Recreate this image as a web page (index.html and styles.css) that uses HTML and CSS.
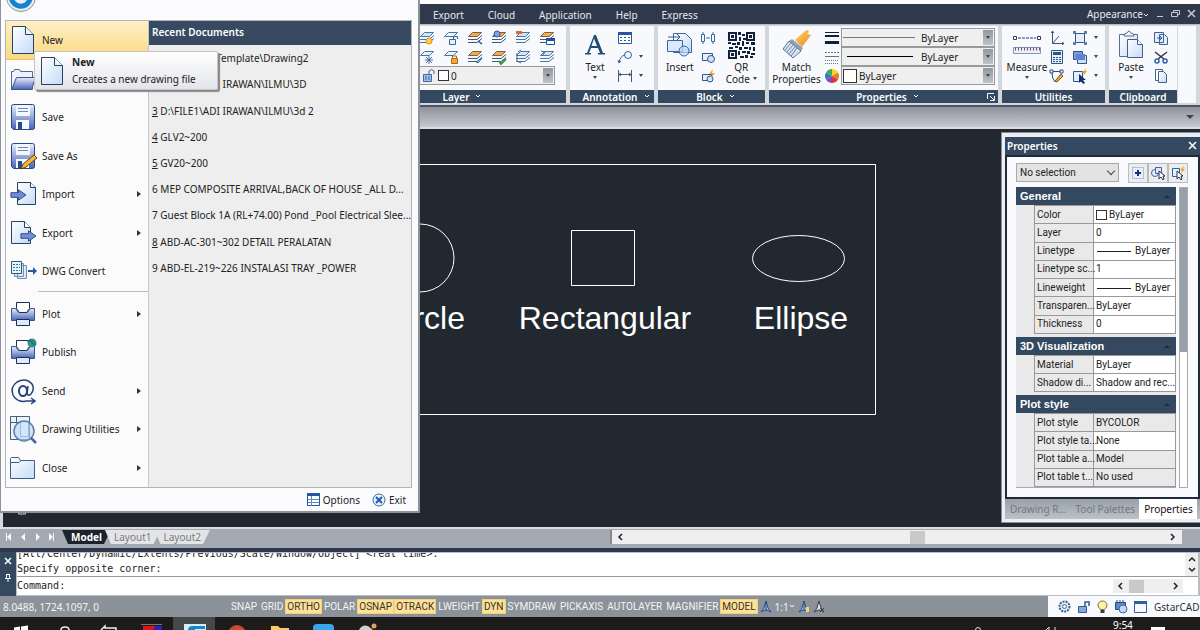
FILE: index.html
```html
<!DOCTYPE html>
<html lang="en">
<head>
    <meta charset="UTF-8">
    <meta name="viewport" content="width=device-width, initial-scale=1.0">
    <title>GstarCAD</title>
    <link rel="stylesheet" href="styles.css">
</head>
<body>
    <!-- Shared icon shapes -->
    <svg class="defs" width="0" height="0" aria-hidden="true">
        <defs>
            <linearGradient id="paper" x1="0" y1="0" x2="1" y2="1">
                <stop offset="0" stop-color="#fff"/><stop offset="1" stop-color="#c4dbf8"/>
            </linearGradient>
            <linearGradient id="steel" x1="0" y1="0" x2="0" y2="1">
                <stop offset="0" stop-color="#e6eeff"/><stop offset="1" stop-color="#4963b4"/>
            </linearGradient>
            <linearGradient id="gold" x1="0" y1="0" x2="1" y2="1">
                <stop offset="0" stop-color="#ffd36c"/><stop offset="1" stop-color="#e88b1d"/>
            </linearGradient>
        </defs>
        <symbol id="page" viewBox="0 0 28 30">
            <path d="M3.5 1.5h13l8 8v19h-21z" fill="url(#paper)" stroke="#29405f"/>
            <path d="M16.500 1.500v8h8" fill="#eef5ff" stroke="#29405f"/>
        </symbol>
        <symbol id="floppy" viewBox="0 0 28 30">
            <path d="M2.500 4.500q0-2 2-2h19q2 0 2 2v21q0 2-2 2h-19l-2-2z" fill="url(#steel)" stroke="#2b4485"/>
            <path d="M7 3h14v11H7z" fill="#f2f6fd"/>
            <path d="M9 6.500h10M9 9.500h10" stroke="#6f87b8"/>
            <path d="M7 18h13v9H7z" fill="#f5f8ff"/>
            <path d="M9 20h4v7H9z" fill="#274a92"/>
        </symbol>
        <symbol id="printer" viewBox="0 0 28 30">
            <path d="M2.500 9.500h4l3 4h9l3-4h4v12h-23z" fill="url(#steel)" stroke="#3b5393"/>
            <path d="M7.500 3.500h13v6l-3 4h-7l-3-4z" fill="#fff" stroke="#1c2f52"/>
            <path d="M7.500 20.500h13v6h-13z" fill="#dfeafd" stroke="#1c2f52"/>
        </symbol>
        <symbol id="arrow" viewBox="0 0 18 12">
            <path d="M1 3.500h8V.500l8 5.500-8 5.500v-3H1z" fill="#6f8dd2" stroke="#304a92"/>
        </symbol>
        <symbol id="layers" viewBox="0 0 16 16">
            <path d="M1 12.500h9l5-4M1 9.500h9l5-4" fill="none" stroke="#4a73a5"/>
            <path d="M5.500 2.500h9l-4 4h-9z" fill="#d3e5f8" stroke="#4a73a5"/>
        </symbol>
        <symbol id="layers-on" viewBox="0 0 16 16">
            <path d="M1 12.500h9l5-4M1 9.500h9l5-4" fill="none" stroke="#3a5a7c"/>
            <path d="M5.500 2.500h9l-4 4h-9z" fill="#f3ad4a" stroke="#7b6048"/>
        </symbol>
        <symbol id="sheet" viewBox="0 0 16 16">
            <path d="M5.500 2.500h9l-4 4h-9z" fill="#edf5ff" stroke="#4a73a5"/>
        </symbol>
        <symbol id="compass" viewBox="0 0 12 14">
            <path d="M6 1l2 7 3 4-4-2H5l-4 2 3-4z" fill="#a9c6ec" stroke="#284a82"/>
            <path d="M6 1v10" stroke="#284a82"/>
        </symbol>
    </svg>

    <!-- Ribbon tabs -->
    <nav class="tabs">
        <a href="#">Export</a>
        <a href="#">Cloud</a>
        <a href="#">Application</a>
        <a href="#">Help</a>
        <a href="#">Express</a>
        <div class="window-controls">
            <button>Appearance<svg width="6" height="5" viewBox="0 0 6 5"><path d="M1 1l2 2 2-2" fill="none" stroke="#e4e8ee"/></svg></button>
            <button aria-label="Minimize"><svg width="8" height="9" viewBox="0 0 8 9"><path d="M1 7.500h6" stroke="#c5cad3"/></svg></button>
            <button aria-label="Restore"><svg width="9" height="9" viewBox="0 0 9 9"><path d="M2.500 3V1.500h6v4H7M.500 3.500h6v4h-6z" fill="none" stroke="#c5cad3"/></svg></button>
            <button aria-label="Close"><svg width="9" height="9" viewBox="0 0 9 9"><path d="M1 1l7 7M8 1L1 8" stroke="#c5cad3" stroke-width="1.500"/></svg></button>
        </div>
    </nav>

    <!-- Ribbon -->
    <div class="ribbon">
        <section class="panel panel-layer">
            <div class="panel-body">
                <div class="layer-tools">
                    <div class="layer-grid">
                        <svg viewBox="0 0 16 16"><use href="#layers"/><circle cx="10" cy="11" r="3" fill="#ffd24a" stroke="#e08a1c"/></svg>
                        <svg viewBox="0 0 16 16"><use href="#sheet"/><path d="M6.500 9.500h6v5h-6zM10.500 9V6.500h4V9" fill="#e3efff" stroke="#3f6697"/></svg>
                        <svg viewBox="0 0 16 16"><use href="#layers-on"/><path d="M11 11l4 3" stroke="#274b80" stroke-width="1.500"/></svg>
                        <svg viewBox="0 0 16 16"><use href="#layers-on"/><circle cx="6" cy="4" r="3" fill="#7fa1e3" stroke="#3557a8"/></svg>
                        <svg viewBox="0 0 16 16"><use href="#layers"/><path d="M1 1h6v3H1z" fill="#dd6a28"/></svg>
                        <svg viewBox="0 0 16 16"><use href="#layers-on"/><path d="M7.500 8.500h8v6h-8z" fill="#fff" stroke="#1f4fa3"/><path d="M7 8h9v3H7z" fill="#1f4fa3"/></svg>
                        <svg viewBox="0 0 16 16"><use href="#sheet"/><path d="M10 7v8M6 11h8M7 8l6 6M13 8l-6 6" stroke="#446f9f"/></svg>
                        <svg viewBox="0 0 16 16"><use href="#sheet"/><path d="M8.500 9.500h6v5h-6z" fill="#f4a932" stroke="#a96b12"/><path d="M9.500 9V7h4v2" fill="none" stroke="#a96b12"/></svg>
                        <svg viewBox="0 0 16 16"><use href="#layers-on"/><path d="M8 12l3 2 4-5" fill="none" stroke="#274b80"/></svg>
                        <svg viewBox="0 0 16 16"><use href="#layers-on"/><path d="M8 12l2 3 5-5" fill="none" stroke="#2f9a3c" stroke-width="2"/></svg>
                        <svg viewBox="0 0 16 16"><use href="#layers"/><path d="M2 4v8l4 2M3 3l3-2" fill="none" stroke="#4b6585"/></svg>
                        <svg viewBox="0 0 16 16"><use href="#layers"/><path d="M2 2l4 1-2 3" fill="none" stroke="#4b6585"/></svg>
                    </div>
                    <div class="combo">
                        <svg width="14" height="15" viewBox="0 0 14 15"><path d="M1.500 6.500h8v7h-8z" fill="#9fc0ec" stroke="#40669c"/><path d="M7 6V3q3-3 5 0v3M4 8v4M7 8v4" fill="none" stroke="#40669c"/></svg>
                        <span class="swatch"></span>
                        <select aria-label="Current layer"><option>0</option></select>
                        <span class="drop"></span>
                    </div>
                </div>
            </div>
            <h2>Layer <svg class="chev" viewBox="0 0 6 5"><path d="M1 1l2 2 2-2"/></svg></h2>
        </section>

        <section class="panel panel-annotation">
            <div class="panel-body">
                <button class="big">
                    <svg width="28" height="30" viewBox="0 0 28 30"><path d="M13 6h2l7 18h2v1.500h-7V24h2l-2-5h-7l-2 5h2v1.500H4V24h2zM13 9.500L10.500 17H16z" fill="#234c74" fill-rule="evenodd"/></svg>
                    <span>Text</span><i class="caret"></i>
                </button>
                <div class="stack">
                    <button aria-label="Table"><svg viewBox="0 0 16 16"><path d="M1.500 2.500h13v11h-13z" fill="#fff" stroke="#28579b"/><path d="M1 2h14v3H1z" fill="#28579b"/><path d="M3 7.500h10M3 10.500h10" stroke="#28579b" stroke-dasharray="2 2"/></svg></button>
                    <button aria-label="Leader"><svg viewBox="0 0 16 16"><circle cx="11" cy="6" r="3.500" fill="#eef4ff" stroke="#3a6398"/><path d="M8 6Q3 7 2 14M1 11l1 3 2-2" fill="none" stroke="#3a6398"/></svg><i class="caret"></i></button>
                    <button aria-label="Dimension"><svg viewBox="0 0 16 16"><path d="M1.500 2v12M14.500 2v12M2 6.500h12M4 5L2 6.500 4 8M12 5l2 1.500L12 8" fill="none" stroke="#3d5a78"/></svg><i class="caret"></i></button>
                </div>
            </div>
            <h2>Annotation <svg class="chev" viewBox="0 0 6 5"><path d="M1 1l2 2 2-2"/></svg></h2>
        </section>

        <section class="panel panel-block">
            <div class="panel-body">
                <button class="big">
                    <svg width="28" height="30" viewBox="0 0 28 30"><path d="M7.500 4.500h12l6 6v13h-18z" fill="url(#paper)" stroke="#446991"/><path d="M1.500 11.500h15v11h-15z" fill="#dce9fb" stroke="#3967af"/><circle cx="18" cy="22" r="5" fill="#c3d6f6" fill-opacity=".7" stroke="#3967af"/><path d="M2 8h12m-3-3l3 3-3 3" fill="none" stroke="#2b5aa5"/></svg>
                    <span>Insert</span>
                </button>
                <div class="stack">
                    <button aria-label="Replace block"><svg viewBox="0 0 16 16"><path d="M1.500 4.500h3v7h-3zM11.500 4.500h3v7h-3zM3 2v2M3 12v2M13 2v2M13 12v2M6 8h4" fill="none" stroke="#2d709b"/></svg></button>
                    <button aria-label="Create block"><svg viewBox="0 0 16 16"><path d="M2.500 4.500h10v7h-10z" fill="#e7f0fc" stroke="#32598d"/><circle cx="11" cy="10" r="3.500" fill="#cfe0f7" stroke="#32598d"/></svg></button>
                    <button aria-label="Edit block"><svg viewBox="0 0 16 16"><path d="M2.500 6.500h9v6h-9z" fill="#e7f0fc" stroke="#32598d"/><circle cx="10" cy="11" r="3" fill="#cfe0f7" stroke="#32598d"/><path d="M13 1L9 6h3l-1 4 4-5h-3z" fill="#f2a52c"/></svg></button>
                </div>
                <button class="big">
                    <svg width="28" height="30" viewBox="0 0 28 30" shape-rendering="crispEdges">
                        <path d="M2 4h7v7H2zM20 4h7v7h-7zM2 22h7v7H2z" fill="none" stroke="#10213c" stroke-width="2"/>
                        <path d="M4 6h3v3H4zM22 6h3v3h-3zM4 24h3v3H4zM11 3h3v3h-3zM15 5h3v2h-3zM12 8h2v4h-2zM16 9h3v2h-3zM1 13h3v2H1zM5 14h4v2H5zM10 13h3v3h-3zM15 12h2v5h-2zM19 13h3v2h-3zM24 13h4v3h-4zM2 18h4v2H2zM8 17h3v2H8zM12 18h3v3h-3zM17 18h4v2h-4zM22 18h2v3h-2zM26 18h2v4h-2zM11 22h2v4h-2zM15 22h4v2h-4zM20 22h3v3h-3zM24 24h4v2h-4zM13 27h4v2h-4zM18 26h3v3h-3zM23 27h3v2h-3z" fill="#10213c"/>
                    </svg>
                    <span>QR</span><span>Code<i class="caret"></i></span>
                </button>
            </div>
            <h2>Block <svg class="chev" viewBox="0 0 6 5"><path d="M1 1l2 2 2-2"/></svg></h2>
        </section>

        <section class="panel panel-properties">
            <div class="panel-body">
                <button class="big">
                    <svg width="28" height="30" viewBox="0 0 28 30"><path d="M12 11l10-9 3-1 1 2-2 2 4 1-9 12z" fill="url(#gold)"/><path d="M9 10l11 9-2 3L6 12z" fill="#8fa3b6"/><path d="M6 12l12 10-8 7L0 20z" fill="#d8e3f4" stroke="#5d6f92"/><path d="M8 14l-6 7M10 16l-6 7M12 18l-6 7M14 19l-6 8" stroke="#6f7faa"/></svg>
                    <span>Match</span><span>Properties</span>
                </button>
                <div class="stack">
                    <button aria-label="Lineweight"><svg viewBox="0 0 16 16"><path d="M1 2.500h14" stroke="#0e213f"/><path d="M1 6h14" stroke="#0e213f" stroke-width="2"/><path d="M1 12.500h14" stroke="#0e213f" stroke-width="3"/></svg></button>
                    <button aria-label="Linetype"><svg viewBox="0 0 16 16"><path d="M1 3.500h14" stroke="#6b7480" stroke-dasharray="2 1"/><path d="M1 7.500h14" stroke="#6b7480"/><path d="M1 11.500h14M1 14.500h14" stroke="#6b7480" stroke-dasharray="1 1"/></svg></button>
                    <button aria-label="Color"><svg viewBox="0 0 16 16"><path d="M8 8V1a7 7 0 0 1 6 3.500z" fill="#f7d52b"/><path d="M8 8l6-3.500a7 7 0 0 1 0 7z" fill="#ee7d26"/><path d="M8 8l6 3.500A7 7 0 0 1 8 15z" fill="#dd3545"/><path d="M8 8v7a7 7 0 0 1-6-3.500z" fill="#8d47ad"/><path d="M8 8l-6 3.500a7 7 0 0 1 0-7z" fill="#2c78d5"/><path d="M8 8L2 4.500A7 7 0 0 1 8 1z" fill="#42ab47"/></svg></button>
                </div>
                <div class="property-combos">
                    <div class="combo"><span class="rule thin"></span><select aria-label="Lineweight"><option>ByLayer</option></select><span class="drop"></span></div>
                    <div class="combo"><span class="rule"></span><select aria-label="Linetype"><option>ByLayer</option></select><span class="drop"></span></div>
                    <div class="combo"><span class="swatch large"></span><select aria-label="Color"><option>ByLayer</option></select><span class="drop"></span></div>
                </div>
            </div>
            <h2>Properties <svg class="chev" viewBox="0 0 6 5"><path d="M1 1l2 2 2-2"/></svg>
                <svg class="launcher" viewBox="0 0 8 8"><path d="M.500 6V.500H7M3 3l4 4M7.500 3v4.500H3" fill="none" stroke="#fff"/></svg></h2>
        </section>

        <section class="panel panel-utilities">
            <div class="panel-body">
                <button class="big">
                    <svg width="28" height="30" viewBox="0 0 28 30"><path d="M.500 7.500h3v3h-3zM24.500 7.500h3v3h-3z" fill="#fff" stroke="#253d68"/><path d="M5 9h18" stroke="#253d68" stroke-dasharray="3 1"/><path d="M.500 18.500h27v6H.500z" fill="#e9effb" stroke="#8097bf"/><path d="M2 20h25" stroke="#745060" stroke-width="3" stroke-dasharray="1 2"/></svg>
                    <span>Measure</span><i class="caret"></i>
                </button>
                <div class="stack">
                    <button aria-label="UCS"><svg viewBox="0 0 16 16"><path d="M3.500 1v12.500H15M4 13l6-7M2 3l1.500-2L5 3M13 12l2 1.500-2 1.500" fill="none" stroke="#385778"/></svg></button>
                    <button aria-label="Calculator"><svg viewBox="0 0 16 16"><path d="M2.500 1.500h11v13h-11z" fill="#e6effa" stroke="#29558a"/><path d="M4 3h8v3H4z" fill="#29558a"/><path d="M4 8.500h8M4 10.500h8M4 12.500h8" stroke="#29558a" stroke-dasharray="2 1"/></svg></button>
                    <button aria-label="Point style"><svg viewBox="0 0 16 16"><path d="M1 2h3v3H1zM11 2h3v3h-3zM4 3.500h7M3 5q0 6 3 9" fill="none" stroke="#2b4d7e"/><path d="M6 13l6-7 2 2-6 6z" fill="#f0a13b" stroke="#8a5426"/></svg></button>
                </div>
                <div class="stack">
                    <button aria-label="Select"><svg viewBox="0 0 16 16"><path d="M3.500 3.500h9v9h-9z" fill="#e3eefc" stroke="#2c5791"/><path d="M1 1h3v3H1zM12 1h3v3h-3zM1 12h3v3H1zM12 12h3v3h-3z" fill="#5f7da7"/></svg><i class="caret"></i></button>
                    <button aria-label="Draw order"><svg viewBox="0 0 16 16"><path d="M1.500 2.500h9v8h-9z" fill="#7c9fda" stroke="#31568e"/><path d="M5.500 6.500h9v8h-9z" fill="#cfdef4" stroke="#31568e"/><path d="M4 5h9v6H4z" fill="#5e85c9"/></svg><i class="caret"></i></button>
                    <button aria-label="Quick select"><svg viewBox="0 0 16 16"><path d="M1.500 3.500h9v10h-9z" fill="#e3eefc" stroke="#2c5791"/><path d="M7 6v9l2-2 2 3 2-1-2-3h3z" fill="#142f72"/><path d="M14 0l-4 5h2l-1 3 4-5h-2z" fill="#ef9c25"/></svg><i class="caret"></i></button>
                </div>
            </div>
            <h2>Utilities</h2>
        </section>

        <section class="panel panel-clipboard">
            <div class="panel-body">
                <button class="big">
                    <svg width="28" height="30" viewBox="0 0 28 30"><path d="M2.500 5.500h18v22h-18z" fill="url(#paper)" stroke="#567292"/><path d="M7 7q0-3 3-3 2-4 4 0 3 0 3 3z" fill="#eff5fd" stroke="#567292"/><path d="M10.500 10.500h10l5 5v13h-15z" fill="url(#paper)" stroke="#445f83"/><path d="M20.500 10.500v5h5" fill="#fff" stroke="#445f83"/></svg>
                    <span>Paste</span><i class="caret"></i>
                </button>
                <div class="stack">
                    <button aria-label="Paste as block"><svg viewBox="0 0 16 16"><path d="M1.500 2.500h9v10h-9zM6.500 4.500h5l3 3v7h-8z" fill="#e2eefc" stroke="#3e648f"/><path d="M4 8h5M7 6l2 2-2 2" fill="none" stroke="#285cab"/></svg></button>
                    <button aria-label="Cut"><svg viewBox="0 0 16 16"><path d="M2 3l9 7M14 3l-9 7" stroke="#30363e" stroke-width="1.500"/><circle cx="4" cy="12" r="2" fill="none" stroke="#2d5db3" stroke-width="1.500"/><circle cx="12" cy="12" r="2" fill="none" stroke="#2d5db3" stroke-width="1.500"/></svg></button>
                    <button aria-label="Copy"><svg viewBox="0 0 16 16"><path d="M2.500 1.500h7v11h-7z" fill="#fff" stroke="#3e648f"/><path d="M5.500 3.500h5l3 3v8h-8z" fill="url(#paper)" stroke="#3e648f"/></svg></button>
                </div>
            </div>
            <h2>Clipboard</h2>
        </section>
    </div>

    <div class="doc-bar"><i class="caret"></i></div>

    <!-- Drawing area -->
    <main class="workspace">
        <svg class="drawing" width="900" height="398" viewBox="0 0 900 398">
            <g fill="none" stroke="#fff">
                <path d="M100.500 35.500h775v250h-775z"/>
                <circle cx="420" cy="129" r="34"/>
                <path d="M571.500 101.500h63v55h-63z"/>
                <ellipse cx="798.500" cy="129.500" rx="46" ry="23"/>
            </g>
            <g fill="#fff" font-family="Liberation Sans, Arial, sans-serif" font-size="32">
                <text x="465" y="200" text-anchor="end">Circle</text>
                <text x="605" y="200" text-anchor="middle">Rectangular</text>
                <text x="801" y="200" text-anchor="middle">Ellipse</text>
            </g>
            <path d="M18.500 378v7h7v-7" fill="none" stroke="#d0d4d8"/>
        </svg>

        <aside class="palette">
            <header>Properties<button aria-label="Close palette"><svg width="9" height="9" viewBox="0 0 9 9"><path d="M1 1l7 7M8 1L1 8" stroke="#fff" stroke-width="1.500"/></svg></button></header>
            <div class="palette-body">
                <div class="palette-tools">
                    <select aria-label="Selection"><option>No selection</option></select>
                    <div class="palette-buttons">
                        <button aria-label="Toggle pickadd"><svg viewBox="0 0 16 16"><path d="M2.500 2.500h11v11h-11z" fill="#e6eeff" stroke="#718ed0" stroke-dasharray="1 1"/><path d="M8 5v6M5 8h6" stroke="#17336c" stroke-width="2"/></svg></button>
                        <button aria-label="Select objects"><svg viewBox="0 0 16 16"><circle cx="5" cy="8" r="3.500" fill="#e6effc" stroke="#3d66a0"/><path d="M5.500 2.500h6v6h-6z" fill="#dbe9ff" stroke="#3d66a0"/><path d="M9 6v8l2-2 2 3 1-1-1-3h2z" fill="#fff" stroke="#26354d"/></svg></button>
                        <button aria-label="Quick select"><svg viewBox="0 0 16 16"><path d="M2.500 3.500h7v8h-7z" fill="#e6effc" stroke="#2b62ad"/><path d="M7 6v8l2-2 2 3 1-1-1-3h2z" fill="#fff" stroke="#26354d"/><path d="M14 1l-4 4h2l-1 3 4-4h-2z" fill="#ef9c25"/></svg></button>
                    </div>
                </div>
                <div class="property-list">
                    <div class="groups">
                        <h3>General<i></i></h3>
                        <table class="group-general">
                            <tr><th>Color</th><td><span class="box"></span>ByLayer</td></tr>
                            <tr><th>Layer</th><td>0</td></tr>
                            <tr><th>Linetype</th><td><span class="line"></span>ByLayer</td></tr>
                            <tr><th>Linetype sc...</th><td>1</td></tr>
                            <tr><th>Lineweight</th><td><span class="line"></span>ByLayer</td></tr>
                            <tr><th>Transparen...</th><td>ByLayer</td></tr>
                            <tr><th>Thickness</th><td>0</td></tr>
                        </table>
                        <h3>3D Visualization<i></i></h3>
                        <table class="group-visual">
                            <tr><th>Material</th><td>ByLayer</td></tr>
                            <tr><th>Shadow di...</th><td>Shadow and rec...</td></tr>
                        </table>
                        <h3>Plot style<i></i></h3>
                        <table class="group-plot">
                            <tr><th>Plot style</th><td class="locked">BYCOLOR</td></tr>
                            <tr><th>Plot style ta...</th><td>None</td></tr>
                            <tr><th>Plot table a...</th><td class="locked">Model</td></tr>
                            <tr><th>Plot table t...</th><td class="locked">No used</td></tr>
                        </table>
                    </div>
                    <div class="scroll-track"><span></span></div>
                </div>
            </div>
            <footer>
                <button>Drawing R...</button>
                <button>Tool Palettes</button>
                <button class="active">Properties</button>
            </footer>
        </aside>
    </main>

    <!-- Layout tabs and horizontal scroll -->
    <div class="layout-bar">
        <svg class="pager" width="50" height="10" viewBox="0 0 50 10"><path d="M1 1h1v8H1zM6 1v8L2 5zM20 1v8l-4-4zM31 1v8l4-4zM44 1v8l4-4zM48 1h1v8h-1z" fill="#f5f7f9"/></svg>
        <div class="layouts">
            <button class="active">Model</button>
            <button>Layout1</button>
            <button>Layout2</button>
        </div>
        <div class="hscroll">
            <svg width="6" height="8" viewBox="0 0 6 8"><path d="M5 1L2 4l3 3"/></svg>
            <span class="thumb"></span>
            <svg width="6" height="8" viewBox="0 0 6 8"><path d="M1 1l3 3-3 3"/></svg>
        </div>
    </div>

    <!-- Command line -->
    <div class="command">
        <div class="command-side">
            <svg width="8" height="8" viewBox="0 0 8 8"><path d="M1 1l6 6M7 1L1 7" stroke="#fff" stroke-width="1.500"/></svg>
            <svg width="8" height="9" viewBox="0 0 8 9"><path d="M2.500 1v4M5.500 1v4M2 1.500h4M1 5.500h6M4 6v3" stroke="#fff"/></svg>
        </div>
        <div class="command-main">
            <div class="history">
                <div class="lines">
                    <p>[All/Center/Dynamic/Extents/Previous/Scale/Window/Object] &lt;real time&gt;:</p>
                    <p>Specify opposite corner:</p>
                </div>
                <div class="vscroll">
                    <svg width="8" height="6" viewBox="0 0 8 6"><path d="M1 5l3-3 3 3"/></svg>
                    <svg width="8" height="6" viewBox="0 0 8 6"><path d="M1 1l3 3 3-3"/></svg>
                </div>
            </div>
            <div class="prompt">
                <label for="cmd">Command:</label>
                <input id="cmd" type="text">
                <div class="hscroll">
                    <svg width="6" height="8" viewBox="0 0 6 8"><path d="M5 1L2 4l3 3"/></svg>
                    <span class="thumb"></span>
                    <svg width="6" height="8" viewBox="0 0 6 8"><path d="M1 1l3 3-3 3"/></svg>
                </div>
            </div>
        </div>
    </div>

    <!-- Status bar -->
    <div class="status">
        <span class="coords">8.0488, 1724.1097, 0</span>
        <div class="toggles">
            <button>SNAP</button>
            <button>GRID</button>
            <button class="on">ORTHO</button>
            <button>POLAR</button>
            <button class="on">OSNAP</button>
            <button class="on">OTRACK</button>
            <button>LWEIGHT</button>
            <button class="on">DYN</button>
            <button>SYMDRAW</button>
            <button>PICKAXIS</button>
            <button>AUTOLAYER</button>
            <button>MAGNIFIER</button>
            <button class="on">MODEL</button>
        </div>
        <div class="scale">
            <svg width="12" height="14"><use href="#compass"/></svg>
            <button>1:1<svg width="6" height="5" viewBox="0 0 6 5"><path d="M1 1l2 2 2-2" fill="none" stroke="#fff"/></svg></button>
            <svg width="12" height="14" viewBox="0 0 12 14"><use href="#compass"/><path d="M8 7h3v5H8z" fill="#f7d66d"/></svg>
            <svg width="12" height="14" viewBox="0 0 12 14"><path d="M6 1l2 7 3 4-4-2H5l-4 2 3-4z" fill="#e4e6e9" stroke="#3b3f47"/><path d="M7 8l4 4M11 8l-4 4" stroke="#3b3f47"/></svg>
        </div>
        <div class="tray">
            <svg width="13" height="13" viewBox="0 0 13 13"><circle cx="6.500" cy="6.500" r="5" fill="#e9f1fb" stroke="#3c6392" stroke-width="2" stroke-dasharray="2 1"/><circle cx="6.500" cy="6.500" r="2" fill="#fff" stroke="#3c6392"/></svg>
            <svg width="14" height="14" viewBox="0 0 14 14"><path d="M1.500 6.500h8v6h-8z" fill="#86a9e0" stroke="#315895"/><path d="M8 6V2h4v4" fill="none" stroke="#315895" stroke-width="1.500"/></svg>
            <svg width="11" height="14" viewBox="0 0 11 14"><path d="M3.500 9.500Q1 7 1 5a4.500 4 0 0 1 9 0q0 2-2.500 4.500z" fill="#fff3a8" stroke="#7d6d3b"/><path d="M3.500 10h4v3h-4z" fill="#39424f"/></svg>
            <svg width="14" height="14" viewBox="0 0 14 14"><path d="M1.500 2.500h10v7h-10z" fill="#5f88c5" stroke="#23497f"/><path d="M3 0v3M6 0v3M9 0v3" stroke="#23497f"/><circle cx="9" cy="9" r="4" fill="#c3d8f5" stroke="#3869ac"/></svg>
            <svg width="13" height="13" viewBox="0 0 13 13"><path d="M.500 1.500h12v11H.500z" fill="#f5f9ff" stroke="#335fa0"/><path d="M0 1h13v3H0z" fill="#335fa0"/></svg>
            <span>GstarCAD</span>
        </div>
    </div>

    <!-- Desktop taskbar -->
    <div class="taskbar">
        <svg width="420" height="13" viewBox="0 0 420 13">
            <path d="M14 10.500l6-1V13h-6zM21 9.500l7-1V13h-7z" fill="#fff"/>
            <path d="M61 13q0-3 4-3t4 3" fill="none" stroke="#eee" stroke-width="1.500"/>
            <path d="M101 13l4-4v2h11v2" fill="none" stroke="#eee" stroke-width="1.500"/>
            <path d="M141 7h21v1h-21z" fill="#777"/><path d="M143 9h13l-3 4h-10z" fill="#e31219"/><path d="M156 9h6v4h-9z" fill="#2024c8"/>
            <path d="M173 0h42v13h-42z" fill="#45484b"/><path d="M184 7h22v6h-22z" fill="#d8edf8"/><path d="M188 13q0-4 5-4h12v3h-10v1z" fill="#1586c7"/>
            <circle cx="237" cy="17" r="9" fill="#c94a3b"/>
            <path d="M271 9h7l2 2h9v2h-18z" fill="#f4cf65"/>
            <rect x="313" y="7" width="21" height="12" rx="4" fill="#36a6ee"/>
            <path d="M359 13q3-6 9-4l5 4z" fill="#cfcfc8"/><circle cx="374" cy="9" r="2.500" fill="#d7a465"/>
        </svg>
        <div class="clock">
            <svg width="130" height="13" viewBox="0 0 130 13"><circle cx="8" cy="13" r="2.500" fill="none" stroke="#ddd"/><path d="M76 13l3-3M79 10v3M85 10v3" stroke="#ddd" fill="none"/></svg>
            <time>9:54</time>
            <svg width="14" height="13" viewBox="0 0 14 13"><path d="M0 10h14v3H0z" fill="#fff"/></svg>
        </div>
    </div>

    <!-- Application menu -->
    <div class="app-menu">
        <div class="app-logo">
            <svg width="32" height="32" viewBox="0 0 32 32"><circle cx="16" cy="16" r="14.500" fill="#e9edf2" stroke="#8d939b"/><path d="M7 12a9.500 9.500 0 1 0 17-1" fill="none" stroke="#1681cc" stroke-width="5"/><path d="M13 17q5 0 7-5" fill="none" stroke="#48b8ee" stroke-width="4"/></svg>
        </div>
        <div class="menu-columns">
            <div class="commands">
                <div class="command-group first">
                    <button class="selected"><svg viewBox="0 0 28 30"><use href="#page"/></svg>New</button>
                    <button aria-label="Open"><svg viewBox="0 0 28 30"><path d="M2.500 25.500v-18h2l1-2h5l1 2h12v18z" fill="#eef3fb" stroke="#53698c"/><path d="M2.500 25.500l5-12h19l-4 12z" fill="url(#steel)" stroke="#3d578c"/></svg></button>
                    <button><svg viewBox="0 0 28 30"><use href="#floppy"/></svg>Save</button>
                    <button><svg viewBox="0 0 28 30"><use href="#floppy"/><path d="M12 28l2-5 11-9 3 3-11 9z" fill="#f6b532" stroke="#5b4526"/></svg>Save As</button>
                    <button class="sub"><svg viewBox="0 0 28 30"><path d="M8.500 3.500h13l5 5v17h-18z" fill="url(#paper)" stroke="#29405f"/><path d="M21.500 3.500v5h5" fill="#fff" stroke="#29405f"/><use href="#arrow" x="1" y="10" width="17" height="12"/></svg>Import</button>
                    <button class="sub"><svg viewBox="0 0 28 30"><path d="M2.500 3.500h13l6 6v16h-19z" fill="url(#paper)" stroke="#29405f"/><path d="M15.500 3.500v6h6" fill="#fff" stroke="#29405f"/><use href="#arrow" x="11" y="12" width="17" height="12"/></svg>Export</button>
                    <button><svg viewBox="0 0 28 30"><path d="M8.500 9.500h9v13h-9zM5.500 7.500h9v13h-9z" fill="#dce9f8" stroke="#7790b1"/><path d="M2.500 5.500h10v12h-10z" fill="#e9f3fb" stroke="#345880"/><path d="M4 8.500h7M4 11.500h7M4 14.500h7" stroke="#328099" stroke-dasharray="2 1"/><path d="M19 14h5v-3l4 4-4 4v-3h-5z" fill="#2857a8"/></svg>DWG Convert</button>
                </div>
                <hr>
                <div class="command-group second">
                    <button class="sub"><svg viewBox="0 0 28 30"><use href="#printer"/></svg>Plot</button>
                    <button><svg viewBox="0 0 28 30"><use href="#printer"/><circle cx="23" cy="6" r="4.500" fill="#2f9a72"/><path d="M19 5q3-3 4 0t4 2" fill="none" stroke="#276ca7" stroke-width="2"/></svg>Publish</button>
                    <button class="sub"><svg viewBox="0 0 28 30"><ellipse cx="14" cy="15" rx="4" ry="5" fill="none" stroke="#24407c" stroke-width="2"/><path d="M19 10l-1 7q1 4 4 1 4-5 1-10Q17 1 8 6 1 11 4 19q4 8 14 6h7m-3-3l4 3-4 3" fill="none" stroke="#24407c" stroke-width="1.500"/></svg>Send</button>
                    <button class="sub"><svg viewBox="0 0 28 30"><path d="M1.500 2.500h19v23h-19zM1.500 8.500h19M7.500 2.500v7" fill="#edf3fa" stroke="#41617f"/><path d="M11.500 7.500h8v15h-8z" fill="#fff" stroke="#7895bc"/><circle cx="15" cy="17" r="10" fill="#b8d5f6" fill-opacity=".6" stroke="#5f7fac" stroke-width="1.500"/><path d="M22 24l5 5" stroke="#49689c" stroke-width="2.500"/></svg>Drawing Utilities</button>
                    <button class="sub"><svg viewBox="0 0 28 30"><path d="M1.500 25.500v-20l1-1h7l2 3h14v18z" fill="url(#paper)" stroke="#405d83"/><path d="M2 9.500h8l2-2" fill="none" stroke="#405d83"/></svg>Close</button>
                </div>
            </div>
            <div class="recent">
                <h2>Recent Documents</h2>
                <ol>
                    <li><a href="#"><u>1</u> C:\Users\IT\Template\Drawing2</a></li>
                    <li><a href="#"><u>2</u> D:\FILE1\ADI IRAWAN\ILMU\3D</a></li>
                    <li><a href="#"><u>3</u> D:\FILE1\ADI IRAWAN\ILMU\3d 2</a></li>
                    <li><a href="#"><u>4</u> GLV2~200</a></li>
                    <li><a href="#"><u>5</u> GV20~200</a></li>
                    <li><a href="#">6 MEP COMPOSITE ARRIVAL,BACK OF HOUSE _ALL D...</a></li>
                    <li><a href="#">7 Guest Block 1A (RL+74.00) Pond _Pool Electrical Slee...</a></li>
                    <li><a href="#"><u>8</u> ABD-AC-301~302 DETAIL PERALATAN</a></li>
                    <li><a href="#">9 ABD-EL-219~226 INSTALASI TRAY _POWER</a></li>
                </ol>
            </div>
        </div>
        <div class="menu-footer">
            <button><svg width="13" height="13" viewBox="0 0 13 13"><path d="M.500.500h12v12H.500z" fill="#fff" stroke="#28559b"/><path d="M0 0h13v3H0z" fill="#28559b"/><path d="M4.500 3v10M1 6.500h11M1 9.500h11" stroke="#5f86bd"/></svg>Options</button>
            <button><svg width="14" height="14" viewBox="0 0 14 14"><circle cx="7" cy="7" r="6" fill="#e7f3ff" stroke="#3b6e9b"/><path d="M4 4l6 6M10 4l-6 6" stroke="#1c59bd" stroke-width="2"/></svg>Exit</button>
        </div>
        <div class="tooltip" role="tooltip">
            <svg width="28" height="30"><use href="#page"/></svg>
            <div><strong>New</strong><span>Creates a new drawing file</span></div>
        </div>
    </div>
</body>
</html>
```
FILE: styles.css
```css
* {
    box-sizing: border-box;
}

body {
    margin: 0;
    height: 100vh;
    overflow: hidden;
    display: flex;
    flex-direction: column;
    position: relative;
    font-family: "Noto Sans", "Open Sans", sans-serif;
    font-size: 10px;
    line-height: 14px;
    color: #222;
    background: #a2a9b2;
}

button, select, input {
    font: inherit;
    color: inherit;
    border: 0;
    margin: 0;
    padding: 0;
    background: none;
}

h2, h3, p, ol {
    margin: 0;
    padding: 0;
    font-size: 10px;
}

svg {
    flex: none;
}

.defs {
    position: absolute;
}

.caret {
    display: inline-block;
    flex: none;
    border: 2px solid transparent;
    border-top: 3px solid #444;
    border-bottom: 0;
}

/* RIBBON TABS */
.tabs {
    display: flex;
    align-items: center;
    gap: 24px;
    height: 24px;
    flex: none;
    padding: 2px 4px 0 433px;
    border-top: 4px solid #fdfdfe;
    background: #30384b;
    color: #e4e8ee;
}

.tabs a {
    color: inherit;
    text-decoration: none;
}

.window-controls {
    display: flex;
    align-items: center;
    gap: 7px;
    margin: -3px 0 0 auto;
}

/* RIBBON */
.ribbon {
    display: flex;
    gap: 4px;
    flex: none;
    height: 83px;
    padding: 1px 4px 2px 350px;
    border-top: 1px solid #b7bbc1;
    border-bottom: 2px solid #4d5361;
    background: #d3d6db;
}

.ribbon::after {
    content: "";
    flex: 1;
    margin-left: -3px;
    background: #f7f9fd;
}

.panel {
    display: flex;
    flex-direction: column;
    background: #f7f9fd;
}

.panel-layer { width: 216px; }
.panel-annotation { width: 84px; }
.panel-block { width: 107px; }
.panel-properties { width: 229px; }
.panel-utilities { width: 103px; }
.panel-clipboard { width: 68px; }

.panel-body {
    display: flex;
    flex: 1;
    min-height: 0;
}

.panel h2 {
    display: flex;
    align-items: center;
    justify-content: center;
    gap: 6px;
    height: 13px;
    flex: none;
    position: relative;
    color: #fff;
    font-weight: 600;
    background: #34495f;
}

.chev {
    width: 6px;
    height: 5px;
    margin-right: -8px;
    fill: none;
    stroke: #fff;
}

.launcher {
    position: absolute;
    right: 3px;
    top: 3px;
    width: 8px;
    height: 8px;
}

.big {
    display: flex;
    flex-direction: column;
    align-items: center;
    width: 50px;
    padding-top: 3px;
    line-height: 12px;
}

.big > svg {
    margin-bottom: 2px;
}

.big > .caret {
    margin-top: 3px;
}

.big span .caret {
    margin: 0 0 3px 3px;
}

.stack {
    display: flex;
    flex-direction: column;
    padding-top: 2px;
}

.stack button {
    display: flex;
    align-items: center;
    gap: 6px;
    height: 19px;
}

.stack svg {
    width: 16px;
    height: 16px;
}

.layer-tools {
    display: flex;
    flex-direction: column;
    width: 100%;
    padding: 2px 11px 0 0;
}

.layer-grid {
    display: grid;
    grid-template-columns: repeat(6, 16px);
    grid-auto-rows: 19px;
    align-items: center;
    justify-content: end;
    column-gap: 8px;
}

.layer-grid svg {
    width: 16px;
    height: 16px;
}

.layer-tools .combo {
    padding-left: 71px;
}

.combo {
    display: flex;
    align-items: center;
    gap: 2px;
    height: 19px;
    padding: 1px;
    border: 1px solid #999;
    background: #efefef;
}

.combo select {
    appearance: none;
    flex: 1;
    min-width: 0;
}

.swatch {
    width: 11px;
    height: 11px;
    border: 1px solid #333;
    background: #fff;
}

.swatch.large {
    width: 14px;
    height: 14px;
}

.drop {
    align-self: stretch;
    display: flex;
    align-items: center;
    justify-content: center;
    width: 10px;
    background: linear-gradient(#9299a2, #bfc3c8);
}

.drop::after {
    content: "";
    border: 2px solid transparent;
    border-top: 3px solid #3d4349;
    border-bottom: 0;
}

.rule {
    width: 66px;
    margin: 0 6px 0 4px;
    border-top: 1px solid #000;
}

.rule.thin {
    width: 72px;
    margin: 0 4px 0 0;
    border-color: #777;
}

.panel-properties .big {
    width: 55px;
}

.panel-properties .stack {
    width: 16px;
}

.property-combos {
    flex: 1;
    padding: 2px 3px 0 1px;
}

.panel-block .big:first-child {
    width: 46px;
}

.panel-block .big + .stack {
    margin: 0 2px 0 -2px;
}

.panel-clipboard .big {
    width: 44px;
}

.panel-annotation .stack,
.panel-utilities .big + .stack {
    margin-left: -3px;
}

.panel-utilities .stack + .stack {
    margin-left: 7px;
}

/* DOCUMENT BAR */
.doc-bar {
    display: flex;
    align-items: center;
    justify-content: flex-end;
    flex: none;
    height: 22px;
    padding-right: 6px;
    border-bottom: 2px solid #dadce2;
    background: linear-gradient(#8e929c, #c6c8d0);
}

.doc-bar .caret {
    border-width: 4px 4px 0;
}

/* DRAWING AREA */
.workspace {
    flex: 1;
    min-height: 0;
    position: relative;
    background: #212830;
    border-left: 3px solid #d6dade;
}

.drawing {
    display: block;
    margin-left: -3px;
}

.palette {
    position: absolute;
    top: 3px;
    right: 0;
    bottom: 4px;
    display: flex;
    flex-direction: column;
    width: 199px;
    padding: 4px 0 3px 3px;
    border: 1px solid #888e98;
    border-right: 0;
    background: #eceef2;
}

.palette header {
    display: flex;
    justify-content: space-between;
    align-items: center;
    height: 18px;
    flex: none;
    padding: 0 3px 0 2px;
    color: #fff;
    font-weight: 600;
    background: #34495f;
}

.palette-body {
    display: flex;
    flex-direction: column;
    flex: 1;
    min-height: 0;
    padding: 6px 10px 9px 9px;
    border: 2px solid #202a3a;
    background: #f8fafd;
    font-family: Roboto, "Liberation Sans", sans-serif;
}

.palette-tools {
    display: flex;
    justify-content: space-between;
    position: relative;
    flex: none;
    height: 24px;
}

.palette-tools select {
    appearance: none;
    width: 103px;
    height: 19px;
    padding-left: 3px;
    border: 1px solid #aaa;
    background: #e3e3e3;
}

.palette-tools::after {
    content: "";
    position: absolute;
    left: 92px;
    top: 5px;
    width: 5px;
    height: 5px;
    border: solid #444;
    border-width: 0 1px 1px 0;
    transform: rotate(45deg);
}

.palette-buttons {
    display: flex;
}

.palette-buttons button {
    width: 20px;
    height: 20px;
    padding: 1px;
    border: 1px solid #bbb;
    background: #ededed;
}

.palette-buttons svg {
    display: block;
    width: 16px;
    height: 16px;
}

.property-list {
    display: flex;
    justify-content: space-between;
    flex: 1;
    min-height: 0;
    overflow: hidden;
}

.groups {
    width: 160px;
    background: #e9e9e9;
    border-bottom: 1px solid #aaa;
}

.groups h3 {
    display: flex;
    align-items: center;
    justify-content: space-between;
    height: 18px;
    padding: 0 6px 0 4px;
    color: #fff;
    font-family: "Liberation Sans", Arial, sans-serif;
    font-size: 11px;
    background: #34495f;
}

.groups h3 i {
    border: 3px solid transparent;
    border-bottom-color: #1b2a45;
    border-top: 0;
}

.groups table {
    width: 142px;
    margin: 0 0 3px 18px;
    border-collapse: collapse;
    table-layout: fixed;
    line-height: 12px;
}

.group-general { height: 129px; }
.group-visual { height: 37px; }
.group-plot { height: 74px; }

.groups th, .groups td {
    padding: 0 0 0 2px;
    border: 1px solid #999;
    text-align: left;
    font-weight: normal;
    white-space: nowrap;
}

.groups th {
    width: 59px;
}

.groups td {
    background: #fff;
}

.groups td.locked {
    background: #e9e9e9;
}

.box {
    display: inline-block;
    width: 11px;
    height: 10px;
    margin-right: 2px;
    border: 1px solid #333;
    vertical-align: middle;
}

.line {
    display: inline-block;
    width: 34px;
    margin: 0 4px 0 1px;
    border-top: 1px solid #222;
    vertical-align: middle;
}

.scroll-track {
    width: 9px;
    border: 1px solid #aaa;
    background: #fff;
}

.scroll-track span {
    display: block;
    height: 55%;
    background: #98a1aa;
}

.palette footer {
    display: flex;
    flex: none;
    height: 20px;
    background: linear-gradient(#98a0aa, #bcc1c7);
    color: #717983;
    white-space: nowrap;
}

.palette footer button {
    padding: 0 4px 0 5px;
}

.palette footer .active {
    color: #111;
    background: #fff;
}

/* LAYOUT TABS */
.layout-bar {
    display: flex;
    align-items: center;
    flex: none;
    height: 25px;
    padding: 0 18px 3px 5px;
    border-top: 2px solid #d9dce0;
    border-bottom: 4px solid #30384b;
    background: #a2a9b2;
}

.pager {
    margin-right: 7px;
}

.layouts {
    display: flex;
    flex: 1;
}

.layouts button {
    height: 14px;
    margin-right: -6px;
    padding: 0 9px;
    line-height: 14px;
    color: #7c7c7c;
    background: #e3e4e6;
    clip-path: polygon(0 0, 100% 0, calc(100% - 7px) 100%, 6px 100%);
}

.layouts .active {
    color: #fff;
    font-weight: 700;
    background: #1c232b;
}

.hscroll {
    display: flex;
    align-items: center;
    justify-content: space-between;
    background: #efefef;
}

.hscroll svg, .vscroll svg {
    fill: none;
    stroke: #222;
    stroke-width: 1.5px;
}

.thumb {
    width: 15px;
    height: 13px;
    background: #c9c9c9;
}

.layout-bar .hscroll {
    width: 572px;
    height: 14px;
    padding: 0 6px 0 5px;
    border-left: 2px solid #888;
}

.layout-bar .thumb {
    margin-left: 42px;
}

/* COMMAND LINE */
.command {
    display: flex;
    flex: none;
    height: 44px;
    font-family: "DejaVu Sans Mono", "Liberation Mono", monospace;
}

.command-side {
    display: flex;
    flex-direction: column;
    align-items: center;
    gap: 8px;
    width: 16px;
    padding-top: 5px;
    background: #34495f;
}

.command-main {
    flex: 1;
    min-width: 0;
    padding: 1px 2px 1px 1px;
    background: #b8bcc4;
}

.history {
    display: flex;
    justify-content: space-between;
    height: 24px;
    background: #fff;
    border-bottom: 1px solid #999;
}

.lines {
    display: flex;
    flex-direction: column;
    justify-content: flex-end;
    overflow: hidden;
    line-height: 15px;
}

.vscroll {
    display: flex;
    flex-direction: column;
    justify-content: space-around;
    align-items: center;
    width: 13px;
    background: #efefef;
}

.prompt {
    display: flex;
    align-items: center;
    height: 18px;
    padding-right: 15px;
    background: #fff;
}

.prompt input {
    flex: 1;
    outline: none;
}

.prompt .hscroll {
    width: 70px;
    height: 14px;
    padding: 0 4px;
}

.prompt .thumb {
    margin-right: 24px;
}

/* STATUS BAR */
.status {
    display: flex;
    align-items: center;
    flex: none;
    height: 21px;
    color: #f2f4f6;
    background: #8c9299;
}

.coords {
    width: 229px;
    padding-left: 3px;
}

.toggles {
    display: flex;
    font-family: Roboto, "Noto Sans", sans-serif;
}

.toggles button {
    height: 15px;
    padding: 0 1px;
    line-height: 13px;
    border: 1px solid transparent;
}

.toggles .on {
    color: #3a3324;
    background: #fbe19a;
    border-color: #f5d078;
}

.scale {
    display: flex;
    align-items: center;
    gap: 3px;
    margin-left: 2px;
}

.scale button {
    display: flex;
    align-items: center;
}

.tray {
    display: flex;
    align-items: center;
    gap: 6px;
    width: 152px;
    height: 21px;
    margin-left: auto;
    padding-left: 10px;
    color: #333;
    background: #f8fafd;
}

.tray span {
    margin-left: 1px;
}

/* TASKBAR */
.taskbar {
    display: flex;
    justify-content: space-between;
    flex: none;
    height: 13px;
    overflow: hidden;
    color: #fff;
    background: #1e1c1b;
}

.clock {
    display: flex;
    width: 230px;
    line-height: 13px;
}

.clock time {
    padding-top: 2px;
    margin: 0 18px 0 13px;
}

/* APPLICATION MENU */
.app-menu {
    position: absolute;
    left: 0;
    top: 0;
    display: flex;
    flex-direction: column;
    width: 420px;
    padding: 0 6px 0 4px;
    border: 1px solid #8c929a;
    border-width: 0 2px 2px 1px;
    background: #fbfbfd;
}

.app-logo {
    height: 20px;
    overflow: hidden;
}

.app-logo svg {
    display: block;
    margin-top: -19px;
}

.menu-columns {
    display: flex;
    height: 468px;
    border: 1px solid #b0b3b8;
}

.commands {
    display: flex;
    flex-direction: column;
    width: 143px;
    background: #fbfbfc;
    border-right: 1px solid #c8c8cc;
}

.command-group {
    display: grid;
    grid-auto-rows: 1fr;
}

.first { flex: 7; }
.second { flex: 5; }

.commands hr {
    width: 110px;
    margin: 0 0 3px auto;
    border: 0;
    border-top: 1px solid #bbb;
}

.command-group button {
    display: flex;
    align-items: center;
    gap: 5px;
    padding: 0 7px 0 3px;
    text-align: left;
}

.command-group svg {
    width: 28px;
    height: 30px;
}

.command-group .selected {
    background: linear-gradient(#fdf0c6, #fad981);
    border-bottom: 1px solid #e6c36a;
}

.sub::after {
    content: "";
    margin-left: auto;
    border: 3px solid transparent;
    border-left: 4px solid #333;
    border-right: 0;
}

.recent {
    flex: 1;
    min-width: 0;
    background: #eee;
}

.recent h2 {
    height: 24px;
    padding: 0 3px;
    line-height: 23px;
    color: #fff;
    font-weight: 600;
    background: #374a62;
}

.recent ol {
    display: flex;
    flex-direction: column;
    height: 236px;
    list-style: none;
}

.recent li {
    display: flex;
    align-items: center;
    flex: 1;
    padding-left: 3px;
    white-space: nowrap;
}

.recent a {
    color: inherit;
    text-decoration: none;
}

.menu-footer {
    display: flex;
    justify-content: flex-end;
    gap: 12px;
    height: 23px;
    padding-right: 6px;
}

.menu-footer button {
    display: flex;
    align-items: center;
    gap: 3px;
}

.tooltip {
    position: absolute;
    left: 33px;
    top: 51px;
    display: flex;
    align-items: center;
    gap: 6px;
    width: 184px;
    height: 39px;
    padding-left: 3px;
    border: 1px solid #c4c4c4;
    border-radius: 2px;
    background: linear-gradient(#fff, #e4e5ea);
    box-shadow: 2px 2px 1px #888;
}

.tooltip div {
    display: flex;
    flex-direction: column;
    line-height: 17px;
}
```
